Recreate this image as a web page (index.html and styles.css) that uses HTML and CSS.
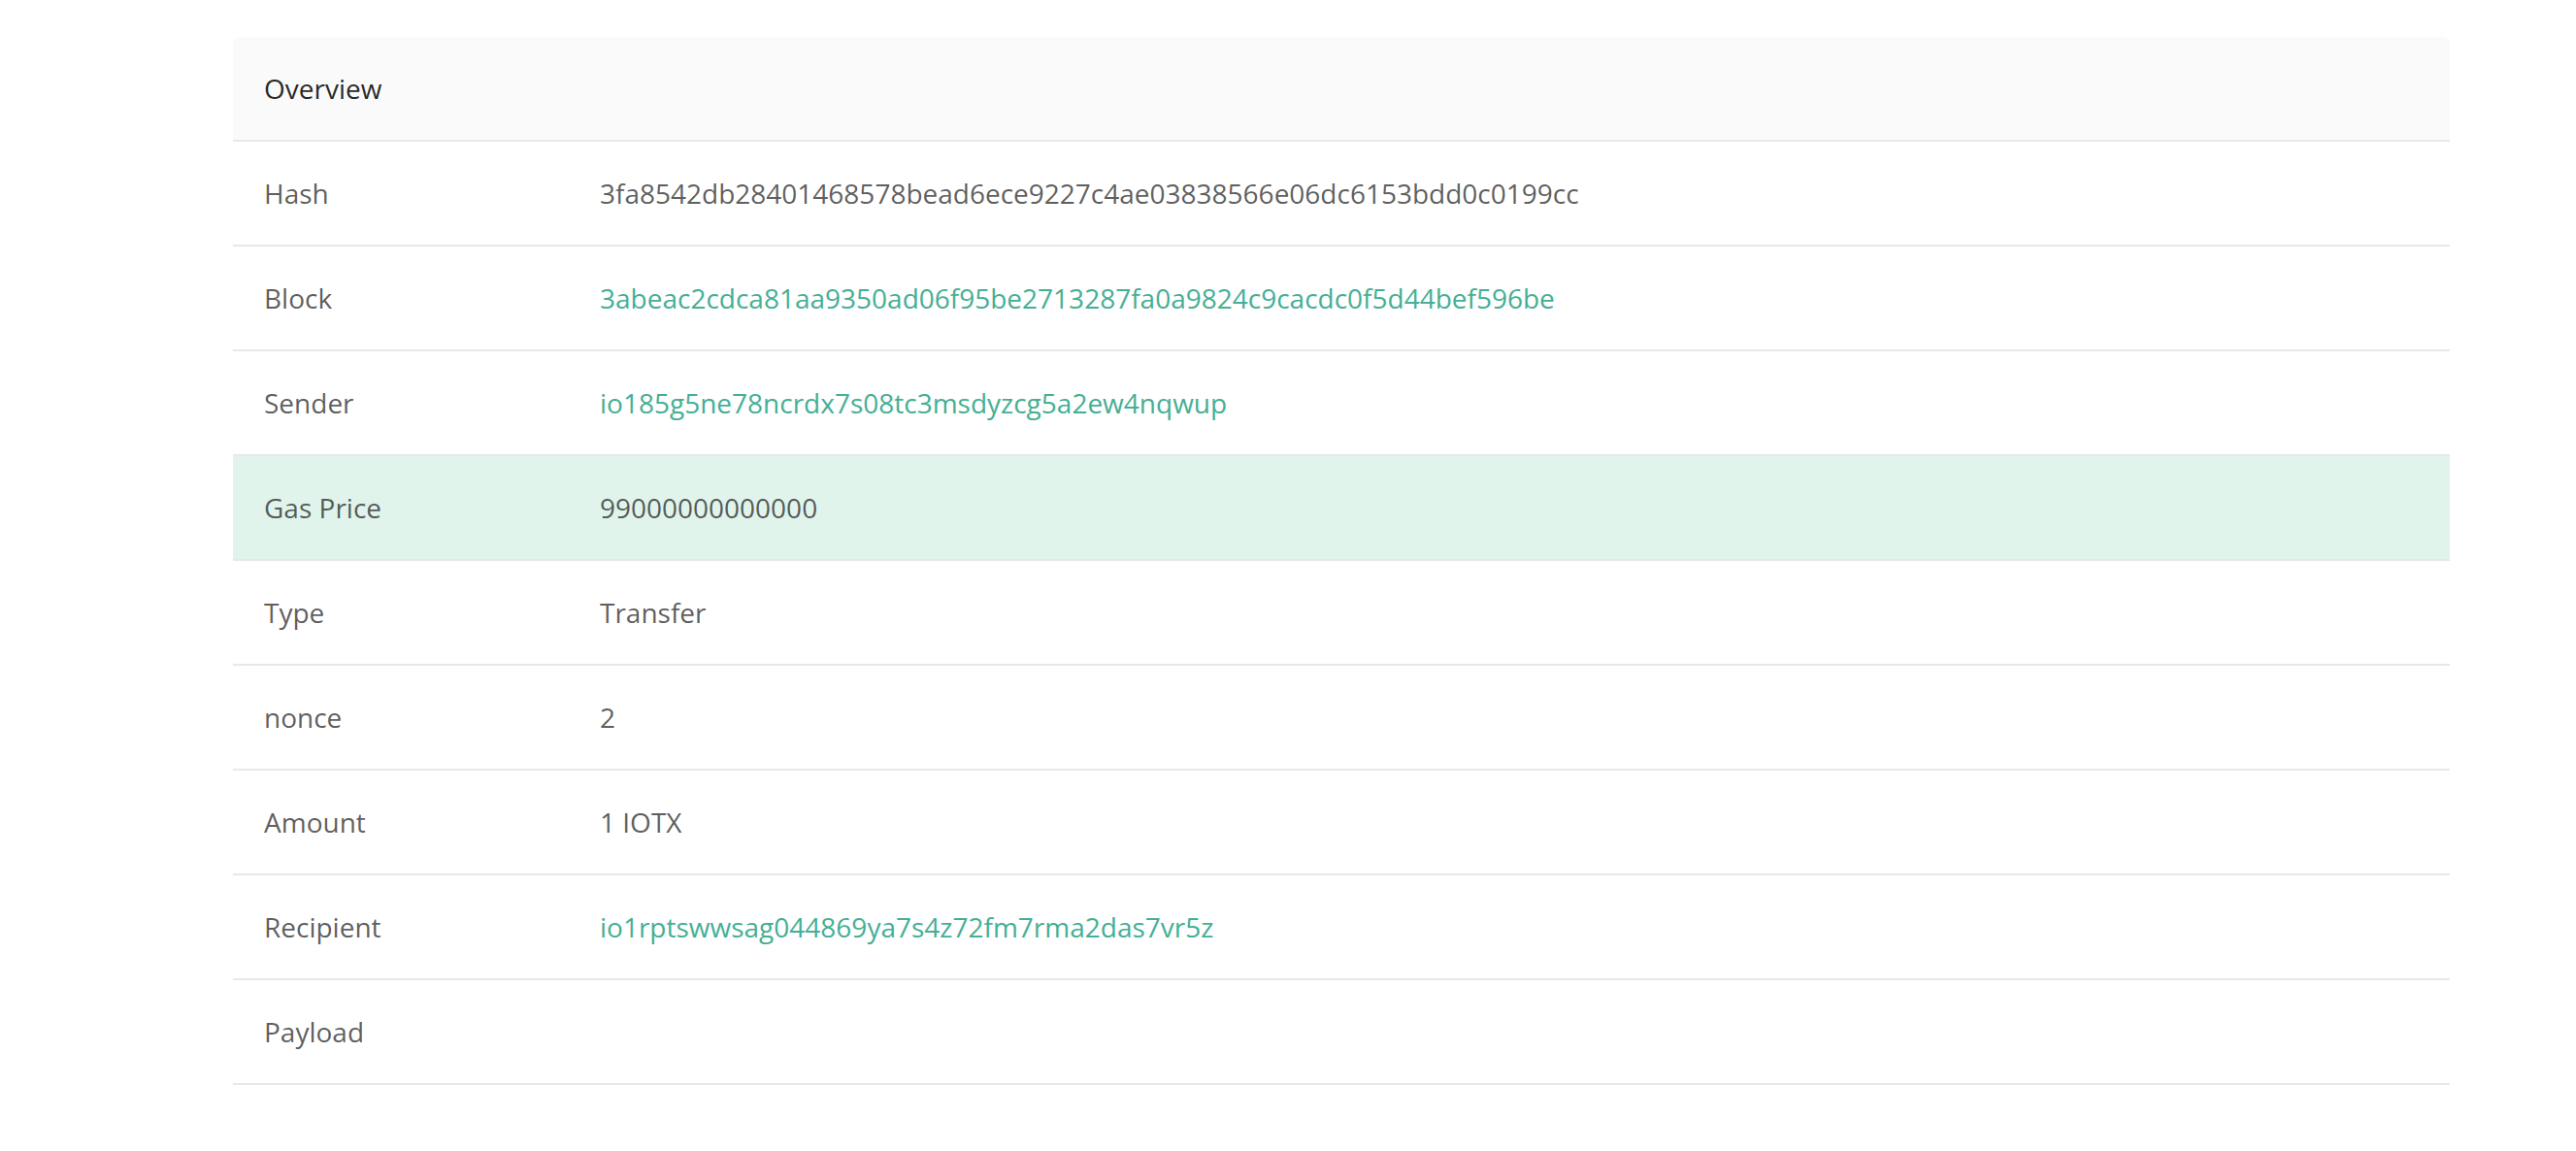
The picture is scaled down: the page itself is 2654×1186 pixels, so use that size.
FILE: index.html
```html
<!DOCTYPE html>
<html>
<head>
<meta charset="utf-8">
<link rel="stylesheet" href="styles.css">
</head>
<body>
<div class="page">
  <table class="detail">
    <thead>
      <tr><th colspan="2">Overview</th></tr>
    </thead>
    <tbody>
      <tr><td class="label">Hash</td><td>3fa8542db28401468578bead6ece9227c4ae03838566e06dc6153bdd0c0199cc</td></tr>
      <tr><td class="label">Block</td><td><a class="link">3abeac2cdca81aa9350ad06f95be2713287fa0a9824c9cacdc0f5d44bef596be</a></td></tr>
      <tr><td class="label">Sender</td><td><a class="link">io185g5ne78ncrdx7s08tc3msdyzcg5a2ew4nqwup</a></td></tr>
      <tr class="active"><td class="label">Gas Price</td><td>99000000000000</td></tr>
      <tr><td class="label">Type</td><td>Transfer</td></tr>
      <tr><td class="label">nonce</td><td>2</td></tr>
      <tr><td class="label">Amount</td><td>1 IOTX</td></tr>
      <tr><td class="label">Recipient</td><td><a class="link">io1rptswwsag044869ya7s4z72fm7rma2das7vr5z</a></td></tr>
      <tr><td class="label">Payload</td><td></td></tr>
    </tbody>
  </table>
</div>
</body>
</html>
```

FILE: styles.css
```css
html, body {
  margin: 0;
  padding: 0;
  background: #ffffff;
}
.page {
  padding: 38px 130px 0 240px;
  font-family: "Open Sans", "Noto Sans", sans-serif;
}
.detail {
  width: 2284px;
  border-collapse: separate;
  border-spacing: 0;
  font-size: 28px;
  line-height: 42px;
  color: rgba(0, 0, 0, 0.65);
}
.detail th {
  background: #fafafa;
  color: rgba(0, 0, 0, 0.85);
  font-weight: 400;
  text-align: left;
  padding: 32px 32px;
  border-bottom: 2px solid #e8e8e8;
  border-radius: 8px 8px 0 0;
}
.detail td {
  padding: 32px 32px;
  height: 42px;
  border-bottom: 2px solid #e8e8e8;
  vertical-align: middle;
}
.detail td.label {
  width: 282px;
}
.detail tr.active td {
  background: #e0f4ec;
}
.link {
  color: #45af95;
  text-decoration: none;
}
```
